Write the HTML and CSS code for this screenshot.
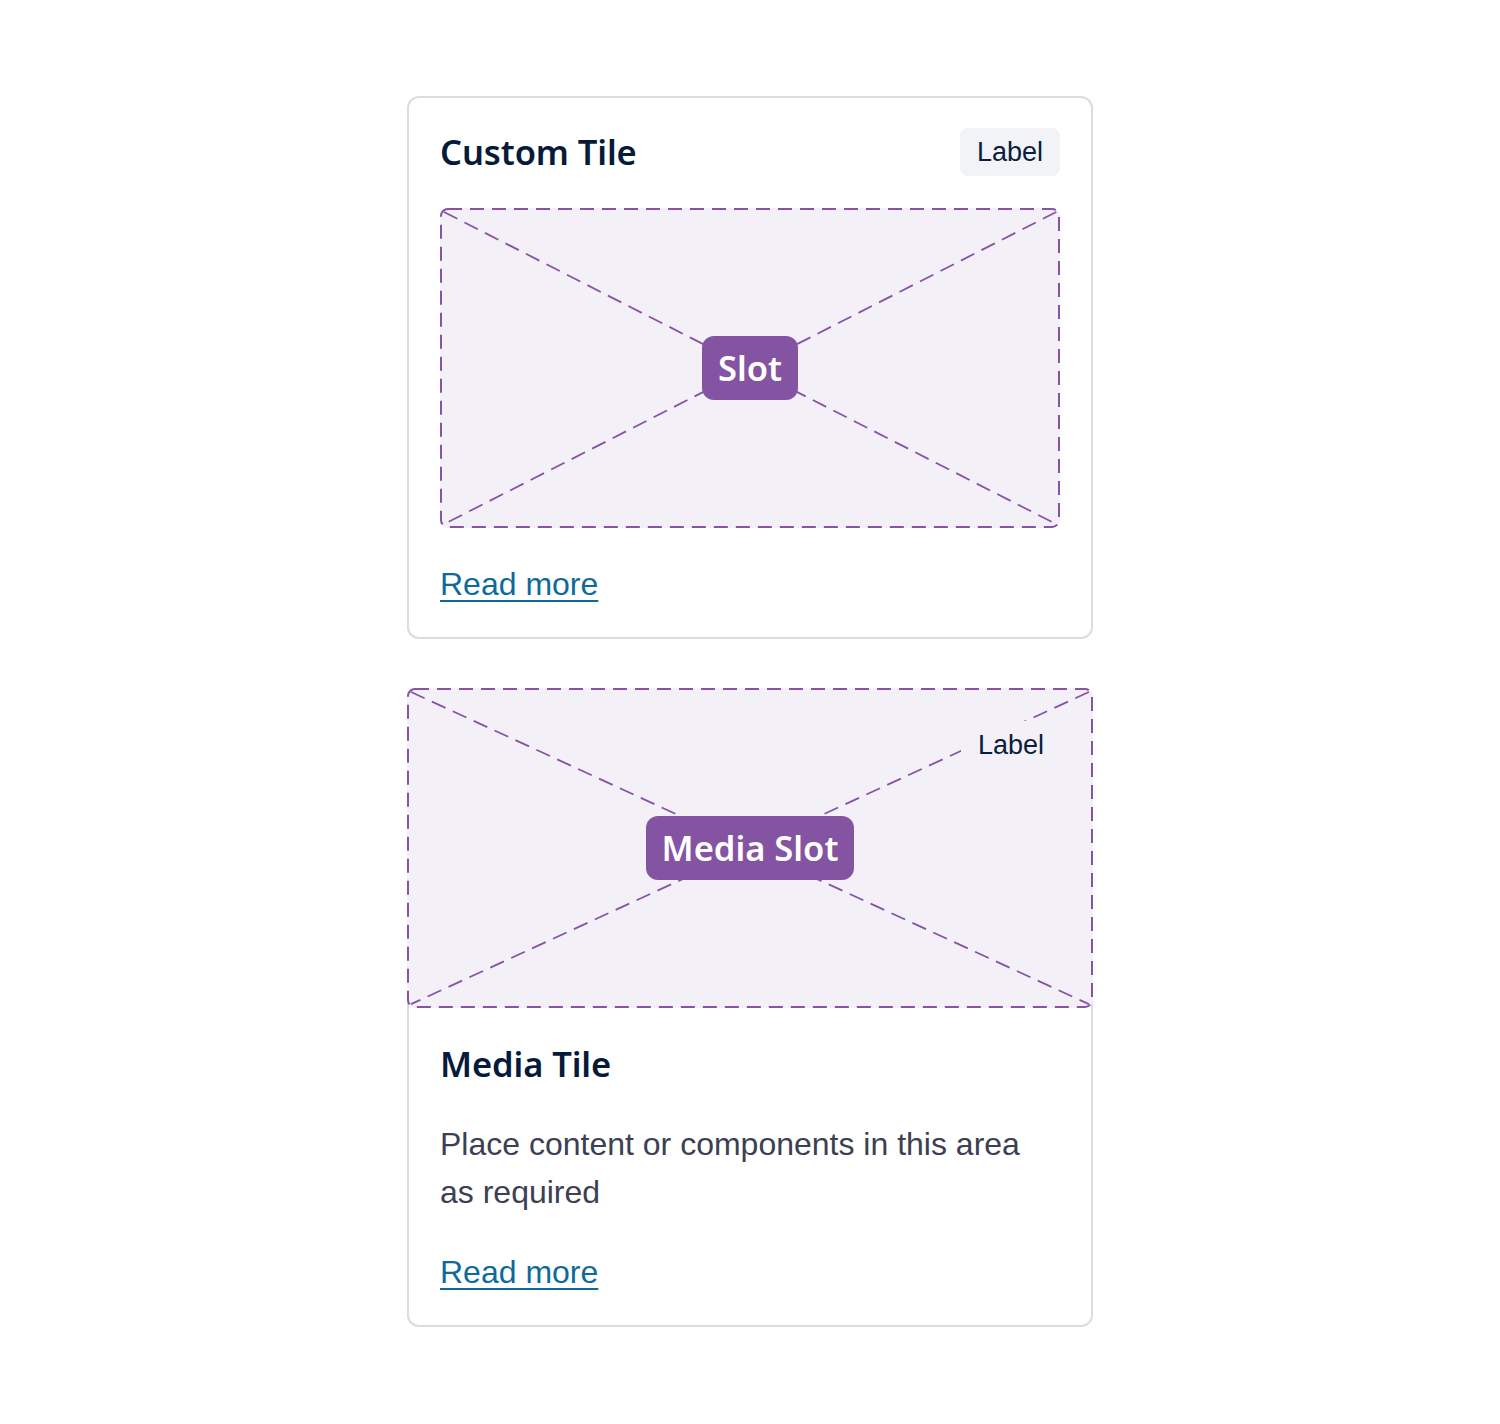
FILE: index.html
```html
<!DOCTYPE html>
<html lang="en">
<head>
<meta charset="utf-8">
<title>Tiles</title>
<link rel="stylesheet" href="styles.css">
</head>
<body>
<main class="page">
  <article class="tile">
    <div class="tile-head">
      <h2 class="tile-title">Custom Tile</h2>
      <span class="label">Label</span>
    </div>
    <div class="slot">
      <svg class="slot-frame" aria-hidden="true">
        <rect></rect>
        <line x1="4" y1="4" x2="99.4%" y2="98.8%"></line>
        <line x1="99.4%" y1="4" x2="4" y2="98.8%"></line>
      </svg>
      <span class="slot-badge">Slot</span>
    </div>
    <a class="read-more" href="#">Read more</a>
  </article>

  <article class="tile tile-media">
    <div class="slot slot-media">
      <svg class="slot-frame" aria-hidden="true">
        <rect></rect>
        <line x1="4" y1="4" x2="99.4%" y2="98.8%"></line>
        <line x1="99.4%" y1="4" x2="4" y2="98.8%"></line>
      </svg>
      <span class="slot-badge">Media Slot</span>
    </div>
    <span class="label label-media">Label</span>
    <div class="tile-body">
      <h2 class="tile-title">Media Tile</h2>
      <p class="tile-text">Place content or components in this area as required</p>
      <a class="read-more" href="#">Read more</a>
    </div>
  </article>
</main>
</body>
</html>
```
FILE: styles.css
```css
* { box-sizing: border-box; }

html, body {
  margin: 0;
  padding: 0;
  background: #ffffff;
}

body {
  font-family: "Liberation Sans", Arial, sans-serif;
  color: #0a1e3e;
}

.page {
  display: flex;
  flex-direction: column;
  align-items: center;
  gap: 49px;
  padding: 96px 0;
}

.tile {
  position: relative;
  width: 686px;
  border: 2px solid #dcdcdc;
  border-radius: 12px;
  background: #fff;
  padding: 30px 31px 29px;
  display: flex;
  flex-direction: column;
}

.tile-head {
  display: flex;
  justify-content: space-between;
  align-items: center;
  height: 48px;
}

.tile-title {
  margin: 0;
  font-family: "Noto Sans", "Open Sans", sans-serif;
  font-weight: 600;
  font-size: 34.5px;
  line-height: 48px;
  color: #061b3a;
  letter-spacing: -0.1px;
}

.label {
  display: inline-block;
  background: #f2f3f7;
  color: #0a1e3e;
  font-size: 27px;
  line-height: 48px;
  padding: 0 17px;
  border-radius: 8px;
}

.slot {
  position: relative;
  height: 320px;
  margin-top: 32px;
  background: #f3f0f7;
  border-radius: 8px;
  display: flex;
  align-items: center;
  justify-content: center;
}

.slot-frame {
  position: absolute;
  inset: 0;
  width: 100%;
  height: 100%;
  overflow: visible;
}

.slot-frame rect {
  x: 1px;
  y: 1px;
  width: calc(100% - 2px);
  height: calc(100% - 2px);
  rx: 7px;
  fill: none;
  stroke: #8653a5;
  stroke-width: 2;
  stroke-dasharray: 14 8;
}

.slot-frame line {
  stroke: #8653a5;
  stroke-width: 1.8;
  stroke-dasharray: 15 8;
}

.slot-badge {
  position: relative;
  background: #8454a3;
  color: #ffffff;
  font-family: "Noto Sans", "Open Sans", sans-serif;
  font-weight: 600;
  font-size: 34.5px;
  line-height: 64px;
  height: 64px;
  padding: 0 16px;
  border-radius: 12px;
}

.read-more {
  display: block;
  align-self: flex-start;
  margin-top: 32px;
  font-size: 32px;
  line-height: 48px;
  color: #0f6a9a;
  text-decoration: underline;
  text-decoration-thickness: 2px;
  text-underline-offset: 5px;
}

.tile-media {
  padding: 0 0 29px;
}

.slot-media {
  margin: -2px -2px 0;
}

.label-media {
  position: absolute;
  top: 31px;
  right: 30px;
  background: #f3f0f7;
}

.tile-body {
  padding: 32px 31px 0;
  display: flex;
  flex-direction: column;
}

.tile-text {
  margin: 32px 0 0;
  font-size: 32px;
  line-height: 48px;
  color: #3c4052;
}
```
